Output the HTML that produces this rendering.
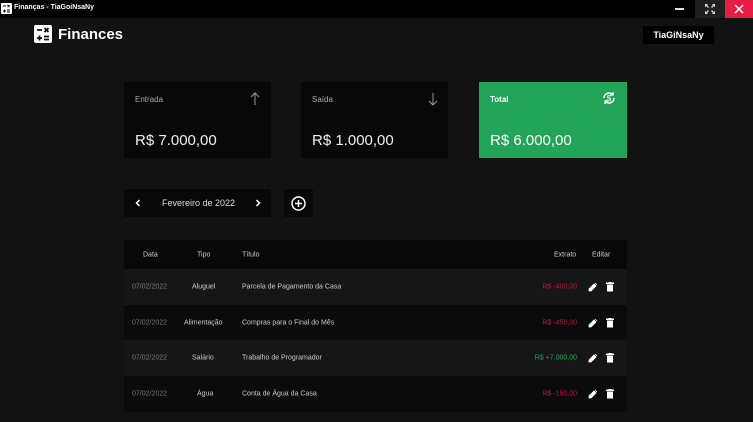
<!DOCTYPE html><html><head><style>
*{margin:0;padding:0;box-sizing:border-box}
body{width:753px;height:422px;background:#121212;font-family:"Liberation Sans",sans-serif;color:#fff;position:relative;overflow:hidden}
.abs{position:absolute}
.tb{left:0;top:0;width:753px;height:18px;background:#000}
.card{top:82px;width:147px;height:76px;background:#080808}
.card .l{position:absolute;left:11px;top:13px;font-size:8px;color:#aaa}
.card .v{position:absolute;left:11px;top:50px;font-size:15px;color:#eee}
.row{left:124px;width:503px;height:35.5px;font-size:7px;color:#ccc}
.row span{position:absolute;top:50%;transform:translateY(-50%)}
.ic{position:absolute;top:50%;transform:translateY(-50%)}
</style></head><body>
<div class="abs tb"></div>
<svg class="abs" style="left:1px;top:3px" width="11" height="11" viewBox="0 0 11 11"><rect width="11" height="11" rx="1" fill="#fff"/><path d="M2 3h3M6.5 2l2 2M8.5 2l-2 2M2 8h3M3.5 6.5v3M6 7h3M6 9h3" stroke="#000" stroke-width="1"/></svg>
<div class="abs" style="left:14px;top:4px;font-size:7px;font-weight:bold">Finanças - TiaGoiNsaNy</div>
<div class="abs" style="left:665px;top:0;width:30px;height:18px;background:#000"><div style="position:absolute;left:10px;top:8px;width:9px;height:1.5px;background:#ddd"></div></div>
<div class="abs" style="left:695px;top:0;width:30px;height:18px;background:#1f1f1f"><svg class="abs" style="left:10px;top:4px" width="10" height="10" viewBox="0 0 10 10"><path d="M0 3V0h3M7 0h3v3M10 7v3H7M3 10H0V7M0 0l3.5 3.5M10 0L6.5 3.5M10 10L6.5 6.5M0 10l3.5-3.5" stroke="#ddd" stroke-width="1.3" fill="none"/></svg></div>
<div class="abs" style="left:725px;top:0;width:28px;height:18px;background:#e81d45"><svg class="abs" style="left:9px;top:4px" width="10" height="10"><path d="M1 1l8 8M9 1l-8 8" stroke="#fff" stroke-width="1.5"/></svg></div>
<svg class="abs" style="left:34px;top:25px" width="18" height="18" viewBox="0 0 18 18"><rect width="18" height="18" rx="2" fill="#fff"/><path d="M3 5h5M10.5 3l4 4M14.5 3l-4 4M3 13h5M5.5 10.5v5M10 11.5h5M10 14.5h5" stroke="#121212" stroke-width="1.8"/></svg>
<div class="abs" style="left:58px;top:26px;font-size:15px;font-weight:bold">Finances</div>
<div class="abs" style="left:643px;top:26px;width:71px;height:18px;background:#000;font-size:9px;font-weight:bold;text-align:center;line-height:18px">TiaGiNsaNy</div>
<div class="abs card" style="left:124px"><div class="l">Entrada</div><svg class="abs" style="left:126px;top:10px" width="10" height="14"><path d="M5 13V1M1 5l4-4 4 4" stroke="#999" stroke-width="1" fill="none"/></svg><div class="v">R$ 7.000,00</div></div>
<div class="abs card" style="left:301px"><div class="l">Saída</div><svg class="abs" style="left:127px;top:10px" width="10" height="14"><path d="M5 1v12M1 9l4 4 4-4" stroke="#999" stroke-width="1" fill="none"/></svg><div class="v">R$ 1.000,00</div></div>
<div class="abs card" style="left:479px;width:148px;background:#22a559"><div class="l" style="color:#fff;font-weight:bold">Total</div>
<svg class="abs" style="right:11px;top:9px" width="14" height="14" viewBox="0 0 14 14"><path d="M2 7a5 5 0 0 1 9-3M12 7a5 5 0 0 1-9 3" stroke="#fff" stroke-width="1.5" fill="none"/><path d="M11 1v3h-3M3 13v-3h3" stroke="#fff" stroke-width="1.3" fill="none"/><text x="7" y="10" font-size="8" text-anchor="middle" fill="#fff" font-family="Liberation Sans">$</text></svg>
<div class="v" style="color:#fff">R$ 6.000,00</div></div>
<div class="abs" style="left:124px;top:189px;width:147px;height:28px;background:#080808;font-size:9px;color:#ddd">
<svg class="abs" style="left:11px;top:10px" width="6" height="8"><path d="M4.5 1L1.5 4l3 3" stroke="#fff" stroke-width="1.5" fill="none"/></svg>
<span class="abs" style="left:38px;top:9px">Fevereiro de 2022</span>
<svg class="abs" style="left:131px;top:10px" width="6" height="8"><path d="M1.5 1l3 3-3 3" stroke="#fff" stroke-width="1.5" fill="none"/></svg></div>
<div class="abs" style="left:284px;top:189px;width:29px;height:28px;background:#080808"><svg class="abs" style="left:7px;top:7px" width="15" height="15"><circle cx="7.5" cy="7.5" r="6.5" stroke="#fff" stroke-width="1.5" fill="none"/><path d="M7.5 4v7M4 7.5h7" stroke="#fff" stroke-width="1.5"/></svg></div>
<div class="abs row" style="top:240px;height:29px;background:#080808;color:#ccc"><span style="left:19px">Data</span><span style="left:73px">Tipo</span><span style="left:118px">Título</span><span style="left:430px">Extrato</span><span style="left:468px">Editar</span></div>
<svg width="0" height="0" style="position:absolute"><defs><g id="ed"><path d="M1 9l0-2 5-5 2 2-5 5z M7 1l2 2" fill="#fff" stroke="#fff" stroke-width="0.8"/></g><g id="tr"><rect x="0" y="0.5" width="8" height="1.5" fill="#fff"/><rect x="2.5" y="0" width="3" height="1" fill="#fff"/><rect x="1" y="2.5" width="6" height="7" fill="#fff"/></g></defs></svg>
<div class="abs row" style="top:269px;background:#161616"><span style="left:8px;color:#777">07/02/2022</span><span style="left:68px">Aluguel</span><span style="left:118px">Parcela de Pagamento da Casa</span><span style="right:50px;color:#b0173b">R$ -400,00</span><svg class="ic" style="left:464px" width="10" height="10"><use href="#ed"/></svg><svg class="ic" style="left:482px" width="8" height="10"><use href="#tr"/></svg></div>
<div class="abs row" style="top:305px;background:#0b0b0b"><span style="left:8px;color:#777">07/02/2022</span><span style="left:60px">Alimentação</span><span style="left:118px">Compras para o Final do Mês</span><span style="right:50px;color:#b0173b">R$ -450,00</span><svg class="ic" style="left:464px" width="10" height="10"><use href="#ed"/></svg><svg class="ic" style="left:482px" width="8" height="10"><use href="#tr"/></svg></div>
<div class="abs row" style="top:340px;background:#161616"><span style="left:8px;color:#777">07/02/2022</span><span style="left:68px">Salário</span><span style="left:118px">Trabalho de Programador</span><span style="right:50px;color:#22a559">R$ +7.000,00</span><svg class="ic" style="left:464px" width="10" height="10"><use href="#ed"/></svg><svg class="ic" style="left:482px" width="8" height="10"><use href="#tr"/></svg></div>
<div class="abs row" style="top:376px;background:#0b0b0b"><span style="left:8px;color:#777">07/02/2022</span><span style="left:73px">Água</span><span style="left:118px">Conta de Água da Casa</span><span style="right:50px;color:#b0173b">R$ -150,00</span><svg class="ic" style="left:464px" width="10" height="10"><use href="#ed"/></svg><svg class="ic" style="left:482px" width="8" height="10"><use href="#tr"/></svg></div>
</body></html>
